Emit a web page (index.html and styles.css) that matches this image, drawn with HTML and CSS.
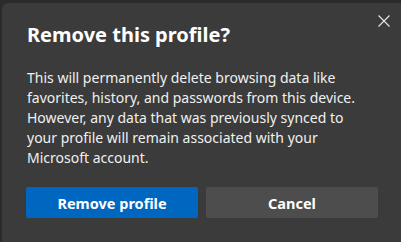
FILE: index.html
```html
<!DOCTYPE html>
<html>
<head>
<meta charset="utf-8">
<link rel="stylesheet" href="styles.css">
</head>
<body>
<div class="dialog">
  <button class="close" aria-label="Close">
    <svg width="12" height="12" viewBox="0 0 12 12"><path d="M0.5 0.5L11.5 11.5M11.5 0.5L0.5 11.5" stroke="#e8e8e8" stroke-width="1.1" fill="none"/></svg>
  </button>
  <h1 class="title">Remove this profile?</h1>
  <p class="body">This will permanently delete browsing data like favorites, history, and passwords from this device. However, any data that was previously synced to your profile will remain associated with your Microsoft account.</p>
  <div class="actions">
    <button class="btn primary">Remove profile</button>
    <button class="btn secondary">Cancel</button>
  </div>
</div>
</body>
</html>
```
FILE: styles.css
```css
html, body {
  margin: 0;
  padding: 0;
  background: #2b2b2b;
  width: 401px;
  height: 242px;
  overflow: hidden;
}
.dialog {
  position: relative;
  margin: 3px 0 0 2px;
  height: 239px;
  background: #3b3b3b;
  border-radius: 6px 0 0 0;
  box-sizing: border-box;
  padding: 18px 22px 0 24px;
  font-family: "Noto Sans", "Open Sans", sans-serif;
  color: #ffffff;
}
.close {
  position: absolute;
  top: 10px;
  right: 9px;
  width: 16px;
  height: 16px;
  padding: 2px;
  border: 0;
  background: none;
  display: flex;
  align-items: center;
  justify-content: center;
}
.title {
  margin: 0 0 0 1px;
  font-size: 20px;
  font-weight: 700;
  line-height: 28px;
}
.body {
  max-width: 336px;
  margin: 19px 0 0 1px;
  font-size: 14px;
  line-height: 20px;
  color: #f0f0f0;
}
.actions {
  display: flex;
  gap: 8px;
  margin-top: 19px;
}
.btn {
  width: 172px;
  height: 31px;
  border: 0;
  border-radius: 2px;
  font-family: "Noto Sans", "Open Sans", sans-serif;
  font-size: 14.5px;
  font-weight: 700;
  color: #ffffff;
}
.primary { background: #0067c0; }
.secondary { background: #4d4d4d; }
```
